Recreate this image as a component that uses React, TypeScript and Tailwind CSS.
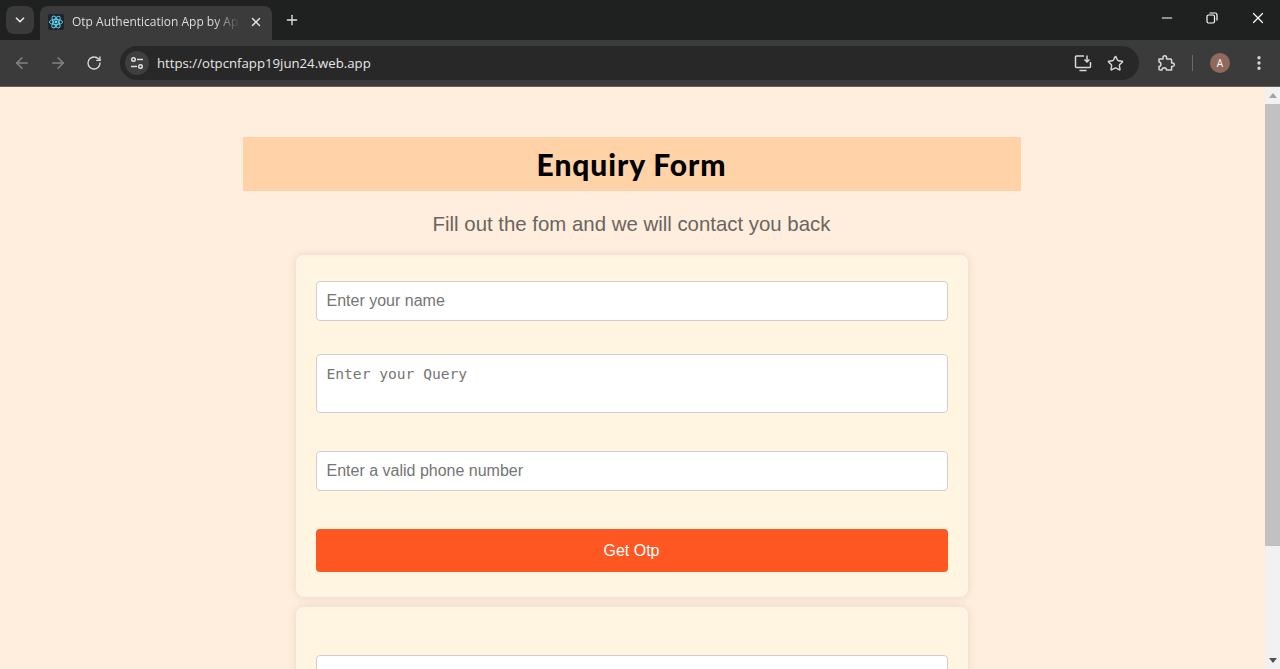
import React from 'react';
import { ArrowLeft, ArrowRight, ChevronDown, Ellipsis, Minus, Plus, RotateCw, Star, X } from 'lucide-react';

const ReactFavicon: React.FC = () => (
  <svg width="16" height="16" viewBox="0 0 16 16" className="shrink-0">
    <rect width="16" height="16" rx="2" fill="#20232a" />
    <g fill="none" stroke="#61dafb" strokeWidth="0.9">
      <ellipse cx="8" cy="8" rx="6.6" ry="2.6" />
      <ellipse cx="8" cy="8" rx="6.6" ry="2.6" transform="rotate(60 8 8)" />
      <ellipse cx="8" cy="8" rx="6.6" ry="2.6" transform="rotate(120 8 8)" />
    </g>
    <circle cx="8" cy="8" r="1.4" fill="#61dafb" />
  </svg>
);

const TuneIcon: React.FC = () => (
  <svg width="16" height="16" viewBox="0 0 16 16" fill="none" stroke="#e3e3e3" strokeWidth="1.4">
    <circle cx="4.5" cy="4.5" r="1.8" />
    <path d="M8 4.5h6" />
    <circle cx="11.5" cy="11.5" r="1.8" />
    <path d="M2 11.5h6" />
  </svg>
);

const RestoreIcon: React.FC = () => (
  <svg width="12" height="12" viewBox="0 0 12 12" fill="none" stroke="#fff" strokeWidth="1.2">
    <rect x="1" y="3" width="7.5" height="8" rx="1.5" />
    <path d="M3.5 1h5.5a2 2 0 0 1 2 2v5.5" />
  </svg>
);

// install app icon: screen open at the top right, arrow going into it
const InstallIcon: React.FC = () => (
  <svg width="18" height="18" viewBox="0 0 18 18" fill="none" stroke="#d8d8d8" strokeWidth="1.5" className="ml-auto">
    <path d="M10 2H2.5a1 1 0 0 0-1 1v9.5a1 1 0 0 0 1 1h13a1 1 0 0 0 1-1V8" />
    <path d="M5.5 16.5h7" />
    <path d="M13 1.5v6M10.5 5.5 13 8l2.500-2.500" />
  </svg>
);

// chrome's extension icon, lucide's puzzle sits at a different angle
const ExtensionIcon: React.FC = () => (
  <svg width="18" height="18" viewBox="0 0 18 18" fill="none" stroke="#d8d8d8" strokeWidth="1.5" strokeLinejoin="round" className="ml-[18px]">
    <path d="M2 5h4V3.500a1.800 1.800 0 0 1 3.600 0V5h4a1 1 0 0 1 1 1v3h1a1.700 1.700 0 0 1 0 3.400h-1V16H9.500c0-3-4.500-3-4.500 0H3a1 1 0 0 1-1-1v-2.500c2.500 0 2.500-4.500 0-4.500z" />
  </svg>
);

const TabStrip: React.FC = () => (
  <div className="flex h-10 shrink-0 items-end bg-[#1f2020] pl-[6px]">
    <div className="mb-[6px] flex h-7 w-7 items-center justify-center rounded-lg bg-[#3a3a3a]">
      <ChevronDown size={14} strokeWidth={3} color="#e3e3e3" />
    </div>
    <div className="ml-[6px] flex h-[34px] w-[232px] items-center rounded-t-lg bg-[#3b3b3b] pb-[2px] pl-2 pr-[9px]">
      <ReactFavicon />
      <span className="ml-2 w-[168px] overflow-hidden whitespace-nowrap text-[12px] text-[#dcdcdc] font-['Open_Sans',sans-serif] [mask-image:linear-gradient(to_right,black_85%,transparent)]">
        Otp Authentication App by Apa
      </span>
      <X size={14} strokeWidth={2.5} color="#e3e3e3" className="ml-auto" />
    </div>
    <div className="mb-[12px] ml-3 flex items-center">
      <Plus size={16} strokeWidth={2} color="#e3e3e3" />
    </div>
    <div className="mb-[13px] ml-auto flex items-center gap-[31px] pr-[13px]">
      <Minus size={16} strokeWidth={1.8} color="#fff" />
      <RestoreIcon />
      <X size={18} strokeWidth={1.6} color="#fff" />
    </div>
  </div>
);

const Toolbar: React.FC = () => (
  <div className="flex h-[47px] shrink-0 items-center border-b border-b-[#6b625c] bg-[#3b3b3b] pl-[13px] pr-3">
    <ArrowLeft size={18} color="#848484" />
    <ArrowRight size={18} color="#848484" className="ml-[18px]" />
    <RotateCw size={16} color="#d8d8d8" className="ml-[19px]" />
    <div className="ml-[18px] flex h-[34px] w-[1019px] items-center rounded-full bg-[#282828] pl-[5px] pr-[14px]">
      <div className="flex h-6 w-6 items-center justify-center rounded-full bg-[#3f3f3f]">
        <TuneIcon />
      </div>
      <span className="ml-2 pt-[2px] text-[13.2px] text-[#e6e6e6] font-['Open_Sans',sans-serif]">https://otpcnfapp19jun24.web.app</span>
      <InstallIcon />
      <Star size={17} strokeWidth={2} color="#d8d8d8" className="ml-[15px] mr-[1px]" />
    </div>
    <ExtensionIcon />
    <div className="ml-[17px] h-4 w-px bg-[#6a6a6a]" />
    <div className="ml-[17px] flex h-5 w-5 items-center justify-center rounded-full bg-[#8f6a5c] text-[10px] text-white font-['Open_Sans',sans-serif]">A</div>
    <Ellipsis size={18} strokeWidth={2.5} color="#d8d8d8" className="ml-[20px] rotate-90" />
  </div>
);

const fieldClass =
  "block h-10 w-full rounded border border-[#cfcfcf] bg-white px-[10px] text-base text-[#333] placeholder:text-[#757575] font-['Liberation_Sans',sans-serif]";

const App: React.FC = () => (
  <div className="flex h-[669px] flex-col overflow-hidden">
    <TabStrip />
    <Toolbar />
    <div className="flex min-h-0 flex-1">
      <main className="min-w-0 flex-1 overflow-hidden bg-[#ffeedd] pr-[2px] pt-[50px]">
        <div className="mx-auto w-[778px]">
          <h1 className="flex h-[54px] items-center justify-center bg-[#ffd2a8] text-[30px] font-black tracking-[0.9px] text-black font-['Lato',sans-serif]">
            Enquiry Form
          </h1>
          <p className="mt-[19px] text-center text-[20.4px] leading-[28px] text-[#6b6460] font-['Liberation_Sans',sans-serif]">
            Fill out the fom and we will contact you back
          </p>
        </div>
        <form className="mx-auto mt-[17px] w-[672px] rounded-lg bg-[#fff5e1] px-5 pb-[25px] pt-[26px] shadow-[0_0_10px_rgba(0,0,0,0.1)]">
          <input className={fieldClass} placeholder="Enter your name" />
          <textarea
            className="mt-[33px] block h-[59px] w-full resize-none rounded border border-[#cfcfcf] bg-white px-[10px] pb-[10px] pt-[8px] text-[14.6px] text-[#333] placeholder:text-[#757575] font-['DejaVu_Sans_Mono',monospace]"
            placeholder="Enter your Query"
          />
          <input className={`mt-[38px] ${fieldClass}`} placeholder="Enter a valid phone number" />
          <button
            type="button"
            className="mt-[38px] block h-[43px] w-full rounded bg-[#ff5722] text-base text-white font-['Liberation_Sans',sans-serif]"
          >
            Get Otp
          </button>
        </form>
        <div className="mx-auto mt-[10px] w-[672px] rounded-lg bg-[#fff5e1] px-5 pb-5 pt-[48px] shadow-[0_0_10px_rgba(0,0,0,0.1)]">
          <input className={fieldClass} />
        </div>
      </main>
      <div className="flex w-[15px] shrink-0 flex-col items-center bg-[#f1f1f1]">
        <div className="flex h-[17px] items-center justify-center">
          <div className="border-x-[4px] border-b-[5px] border-x-transparent border-b-[#a3a3a3]" />
        </div>
        <div className="h-[442px] w-full bg-[#c1c1c1]" />
        <div className="mt-auto flex h-[17px] items-center justify-center">
          <div className="border-x-[4px] border-t-[5px] border-x-transparent border-t-[#505050]" />
        </div>
      </div>
    </div>
  </div>
);

export default App;
